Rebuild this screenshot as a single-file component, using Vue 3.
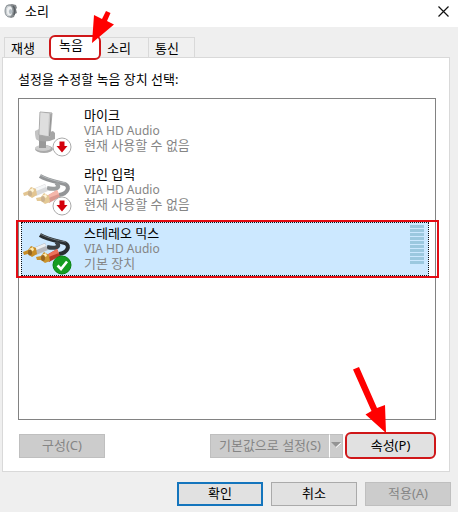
<script setup>
import { ref } from 'vue'

const tabs = ['재생', '녹음', '소리', '통신']
const activeTab = ref(1)
const selected = ref(2)
const devices = [
  { name: '마이크', driver: 'VIA HD Audio', status: '현재 사용할 수 없음', kind: 'mic', ready: false },
  { name: '라인 입력', driver: 'VIA HD Audio', status: '현재 사용할 수 없음', kind: 'line', ready: false },
  { name: '스테레오 믹스', driver: 'VIA HD Audio', status: '기본 장치', kind: 'line', ready: true },
]
</script>

<template>
  <main class="dialog">
    <header class="titlebar">
      <svg class="app-icon" viewBox="0 0 14 16" aria-hidden="true">
        <path d="M3 2 8 1 12 2 13 5 12 6 13 10 11 11 10 14 7 15 3 13 1 9 2 3Z" fill="#85898c" />
        <ellipse cx="5" cy="8" rx="4" ry="6" fill="#c9ced1" stroke="#8a9297" />
        <ellipse cx="5.5" cy="8" rx="2.6" ry="4.2" fill="#eef0f1" />
        <ellipse cx="6.5" cy="8.5" rx="1.6" ry="2.5" fill="#b5bec4" />
        <path d="M9 3Q12 6 10 12" fill="none" stroke="#5a6065" stroke-width="1.5" />
      </svg>
      <h1>소리</h1>
      <button class="close" type="button" aria-label="닫기">
        <svg viewBox="0 0 11 11" aria-hidden="true"><path d="M.5.5 10.5 10.5M10.5.5.5 10.5" stroke="#111" stroke-width="1.2" /></svg>
      </button>
    </header>

    <div class="tabs" role="tablist">
      <button
        v-for="(tab, i) in tabs" :key="tab" type="button" role="tab"
        class="tab" :class="{ active: i === activeTab }" :aria-selected="i === activeTab"
        @click="activeTab = i"
      >{{ tab }}</button>
      <svg class="tab-arrow" viewBox="0 0 24 34" aria-hidden="true">
        <path d="M15 1 19.5 3 16 11 23 14.5 1 33 3 5 11 9Z" fill="#f00" />
      </svg>
    </div>

    <section class="panel">
      <p class="prompt">설정을 수정할 녹음 장치 선택:</p>
      <ul class="devices" role="listbox" aria-label="녹음 장치">
        <li
          v-for="(d, i) in devices" :key="d.name" role="option" class="device"
          :class="{ selected: i === selected }" :aria-selected="i === selected" @click="selected = i"
        >
          <span class="picture">
            <svg v-if="d.kind === 'mic'" class="glyph" viewBox="0 0 50 50" aria-hidden="true">
              <ellipse cx="23" cy="41" rx="9" ry="4" fill="#aaa" />
              <ellipse cx="22" cy="40" rx="8" ry="3" fill="#cdcdcd" />
              <path d="M18 31H25V40H18Z" fill="#999" />
              <path d="M14 23Q23 27 32 23L34 25V31Q23 36 15 31Z" fill="#a6a6a6" />
              <path d="M14 23 18 21V33L15 31Z" fill="#c4c4c4" />
              <path d="M19 4 31 5 29 29 18 27Z" fill="#c7c7c7" stroke="#aaa" />
              <path d="M19.500 4.500 28 5.500 27 28 18.500 26.500Z" fill="#dedede" />
              <path d="M30 6 28.500 28" stroke="#939393" />
            </svg>
            <svg v-else class="glyph" :class="{ faded: !d.ready }" viewBox="0 0 50 50" aria-hidden="true">
              <path d="M19 9C25 13 36 15 44 17C50 20 46 27 38 28" fill="none" stroke="#292e31" stroke-width="4" />
              <path d="M19 8C27 12 37 15 45 16" fill="none" stroke="#687075" />
              <path d="M35 16C41 21 34 23 26 21" fill="none" stroke="#3c4144" stroke-width="4" />
              <path d="M12 22 24 17 27 24 15 29Z" fill="#b7b8bc" />
              <path d="M13 22 24 17.500 25 20 13 25Z" fill="#edf0f2" />
              <path d="M24 30 36 23 39 30 28 36Z" fill="#b83524" />
              <path d="M24 30 36 23 38 27 25 32Z" fill="#ec715a" />
              <path d="M2 26 7 24 10 20 15 22 16 28 11 31 7 28 3 29Z" fill="#c88d25" />
              <path d="M8 23 12 21 13 24 9 27Z" fill="#ffecb0" />
              <ellipse cx="9" cy="26.500" rx="2" ry="3" fill="#96651e" />
              <path d="M15 31 20 30 23 26 28 29 29 35 24 37 20 34 16 34Z" fill="#cb942d" />
              <path d="M21 29 25 27 26 30 22 32Z" fill="#ffeab0" />
              <ellipse cx="22" cy="32" rx="2" ry="3" fill="#986520" />
            </svg>
            <svg class="badge" viewBox="0 0 20 20" aria-hidden="true">
              <template v-if="d.ready">
                <circle cx="10" cy="10" r="9" fill="#159c20" stroke="#07820f" />
                <path d="M5.500 10.500 9 14 15 6.500" fill="none" stroke="#fff" stroke-width="2.600" />
              </template>
              <template v-else>
                <circle cx="10" cy="10" r="9" fill="#fff" stroke="#aaa" />
                <path d="M7.500 4.500H12.500V9H15.500L10 15.500 4.500 9H7.500Z" fill="#d3000b" />
              </template>
            </svg>
          </span>
          <span class="details">
            <span class="name">{{ d.name }}</span>
            <span class="driver">{{ d.driver }}</span>
            <span>{{ d.status }}</span>
          </span>
          <span v-if="d.ready" class="meter"><i v-for="n in 10" :key="n"></i></span>
        </li>
      </ul>
      <div class="actions">
        <button class="button" type="button" disabled>구성(C)</button>
        <div class="split">
          <button class="button default" type="button" disabled>기본값으로 설정(S)</button>
          <button class="button more" type="button" disabled aria-label="기본값 옵션">
            <svg viewBox="0 0 12 8" aria-hidden="true"><path d="M1 1H11L6 6Z" fill="#949494" /><path d="M6 6.500 11 2" stroke="#fff" /></svg>
          </button>
        </div>
        <div class="properties">
          <button class="button" type="button">속성(P)</button>
          <svg class="button-arrow" viewBox="0 0 34 68" aria-hidden="true">
            <path d="M1 3.500 7 1 25 42 33 39 34 67 13.500 48.500 19.500 45Z" fill="#f00" />
          </svg>
        </div>
      </div>
    </section>

    <footer class="footer">
      <button class="button primary" type="button">확인</button>
      <button class="button" type="button">취소</button>
      <button class="button" type="button" disabled>적용(A)</button>
    </footer>
  </main>
</template>

<style>
body { margin: 0; background: #fff; }
</style>

<style scoped>
* { box-sizing: border-box; }
.dialog {
  margin-right: 2px;
  padding-bottom: 6px;
  background: #efefef;
  color: #000;
  font: 13px/16px "Noto Sans", "Noto Sans CJK KR", sans-serif;
}
button { margin: 0; padding: 0; font: inherit; color: inherit; }
svg { display: block; }
.titlebar { display: flex; align-items: center; height: 27px; padding: 0 9px 5px 4px; background: #fff; }
.app-icon { width: 14px; height: 16px; }
h1 { flex: 1; margin: 0 0 0 7px; font: inherit; }
.close { border: 0; background: none; }
.close svg { width: 11px; height: 11px; }
.tabs { position: relative; display: flex; align-items: flex-end; height: 30px; padding-left: 4px; }
.tab { width: 48px; height: 20px; padding-left: 6px; border: 1px solid #d9d9d9; border-width: 1px 1px 0 0; background: #f0f0f0; text-align: left; }
.tab:first-child { width: 46px; border-left-width: 1px; }
.tab.active {
  z-index: 1;
  width: 52px;
  height: 25px;
  margin-bottom: -3px;
  margin-left: -1px;
  padding-bottom: 5px;
  padding-left: 8px;
  border: 2px solid #cf1719;
  border-radius: 6px;
  background: #fff;
}
.tab:last-of-type { width: 46px; }
.tab-arrow { position: absolute; z-index: 2; left: 91px; top: -17px; width: 24px; height: 34px; }
.panel { margin: 0 8px 0 2px; padding: 13px 13px 13px 15px; border: 1px solid #d9d9d9; background: #fff; }
.prompt { margin: 0 0 11px; }
.devices { min-height: 322px; margin: 0; padding: 5px 6px 5px 2px; border: 1px solid #828282; list-style: none; display: flex; flex-direction: column; gap: 5px; }
.device { position: relative; display: flex; align-items: flex-start; min-height: 54px; }
.device.selected { outline: 1px dotted #111; outline-offset: -1px; background: #cce8ff; }
.device.selected::after { content: ""; position: absolute; inset: -2px -10px -2px -5px; border: 2px solid #e30b13; pointer-events: none; }
.picture { position: relative; width: 63px; height: 54px; }
.glyph { width: 50px; height: 50px; margin-top: 4px; }
.faded { opacity: 0.5; }
.badge { position: absolute; left: 31px; top: 33px; width: 20px; height: 20px; }
.details { display: flex; flex: 1; flex-direction: column; padding-top: 4px; line-height: 15px; color: #858585; }
.name { color: #000; }
.driver { font-size: 12px; }
.meter { display: grid; gap: 1px; width: 14px; margin: 3px 5px 0 0; }
.meter i { height: 3px; background: #9bc8df; }
.actions { display: flex; align-items: center; margin-top: 12px; padding-left: 1px; }
.panel { padding-bottom: 12px; }
.button { width: 86px; height: 24px; padding-bottom: 2px; border: 1px solid #aaa; background: #e1e1e1; white-space: nowrap; }
.button:disabled { border-color: #bfbfbf; background: #ccc; color: #858585; }
.split { display: flex; margin-left: auto; }
.split .default { width: 119px; border-right: 0; }
.split .more { width: 14px; border-left: 1px solid #fff; }
.more svg { width: 12px; height: 8px; }
.properties { position: relative; margin-left: 2px; }
.properties .button { width: 91px; height: 27px; border: 2px solid #cf1719; border-radius: 6px; }
.button-arrow { position: absolute; left: 7px; top: -66px; width: 34px; height: 68px; pointer-events: none; }
.footer { display: flex; justify-content: flex-end; gap: 8px; padding: 10px 7px 0; }
.primary { border: 2px solid #1475bd; }
</style>
